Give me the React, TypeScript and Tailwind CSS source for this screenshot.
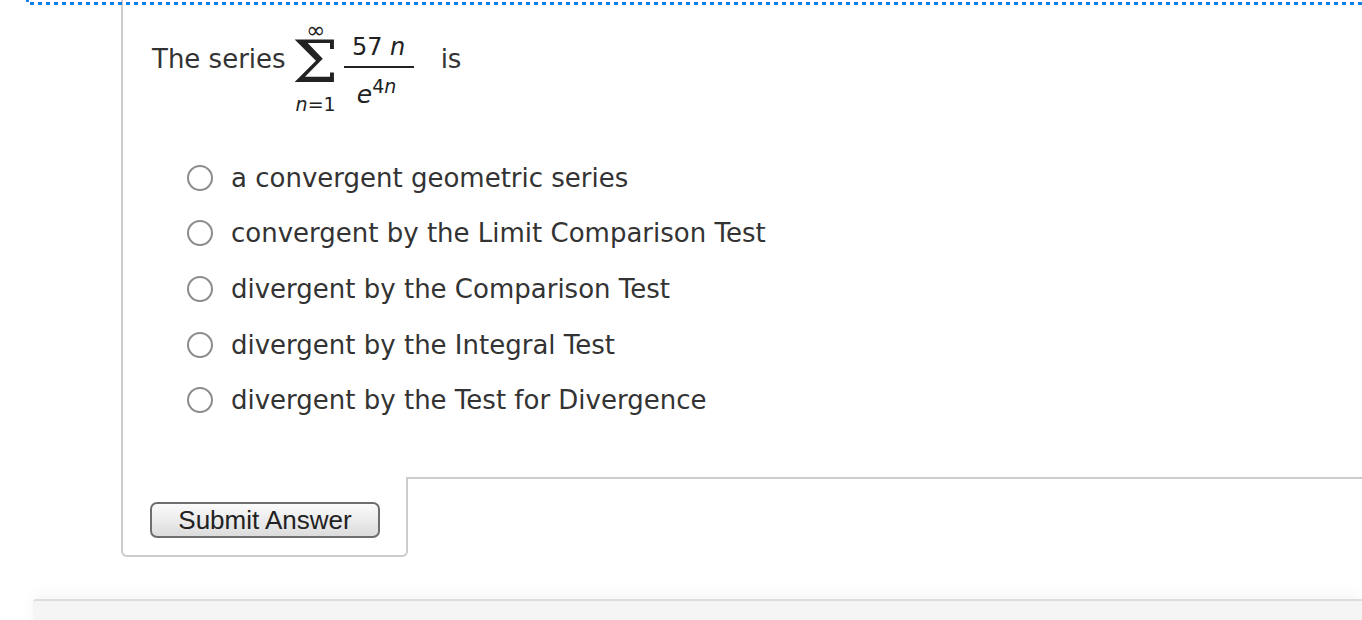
const options = [
  "a convergent geometric series",
  "convergent by the Limit Comparison Test",
  "divergent by the Comparison Test",
  "divergent by the Integral Test",
  "divergent by the Test for Divergence",
];

function SeriesExpression() {
  return (
    <div className="flex h-[150px] items-start text-[#222]">
      <span className="mt-[44px] text-[26px] leading-[30px] text-[#333]">The series</span>

      {/* sigma with limits */}
      <div className="ml-[8px] flex w-[44px] flex-col items-center pt-[20px]">
        <span className="text-[23px] leading-[20px]">∞</span>
        <span className="mt-[2px] scale-x-[1.15] font-['DejaVu_Serif',serif] text-[57px] leading-[40px]">Σ</span>
        <span className="mt-[13px] whitespace-nowrap text-[19px] leading-[19px]">
          <i>n</i>=1
        </span>
      </div>

      {/* fraction */}
      <div className="ml-[6px] flex w-[70px] flex-col items-center">
        <span className="mt-[35px] whitespace-nowrap text-[24px] leading-[24px]">
          57 <i>n</i>
        </span>
        <div className="mt-[7px] h-[2px] w-full bg-[#222]" />
        <div className="mr-[4px] mt-[15px] flex items-start">
          <i className="text-[25px] leading-[24px]">e</i>
          <span className="-mt-[6px] text-[19px] leading-[19px]">
            4<i>n</i>
          </span>
        </div>
      </div>

      <span className="ml-[27px] mt-[44px] text-[26px] leading-[30px] text-[#333]">is</span>
    </div>
  );
}

export default function App() {
  return (
    <div className="relative h-screen overflow-hidden bg-white font-['DejaVu_Sans',sans-serif]">
      {/* focus outline from the block above */}
      <div className="absolute left-[26px] top-0 h-[2px] w-[3px] bg-[#1380e8]" />
      <div className="absolute left-[30px] right-0 top-[2px] h-[3px] bg-[linear-gradient(to_right,#1380e8_4px,transparent_4px)] bg-size-[8px_3px] bg-repeat-x" />

      <div className="ml-[121px] flex flex-col">
        <div className="border-l-2 border-[#cccccc] pb-[49px] pl-[29px]">
          <SeriesExpression />

          <div className="flex flex-col pl-[35px]">
            {options.map((label) => (
              <label key={label} className="flex h-[55.6px] cursor-pointer items-center">
                <span className="h-[26px] w-[26px] shrink-0 rounded-full border-2 border-[#8c8c8c] bg-white" />
                <span className="ml-[18px] whitespace-nowrap text-[26px] leading-[30px] text-[#333]">
                  {label}
                </span>
              </label>
            ))}
          </div>
        </div>

        <div className="flex">
          <div className="h-[80px] w-[287px] shrink-0 rounded-b-[6px] border-2 border-t-0 border-[#cccccc] pl-[27px] pt-[25px]">
            <button className="flex h-[36px] w-[230px] items-center justify-center rounded-[7px] border-2 border-[#6e6e6e] bg-linear-to-b from-[#fbfbfb] to-[#dcdcdc] font-['Liberation_Sans',sans-serif] text-[26px] leading-none text-[#222]">
              Submit Answer
            </button>
          </div>
          <div className="flex-1 border-t-2 border-[#cccccc]" />
        </div>
      </div>

      <div className="ml-[33px] mt-[42px] h-[40px] rounded-tl-[3px] border-t-2 border-[#dddddd] bg-[#f5f5f5] shadow-[0_-6px_14px_rgba(0,0,0,0.035)]" />
    </div>
  );
}
